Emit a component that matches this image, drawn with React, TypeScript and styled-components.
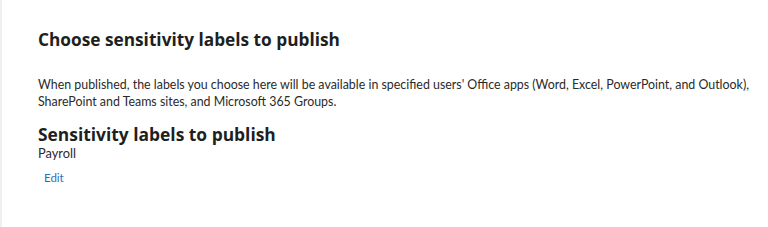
import React from 'react'
import styled, { createGlobalStyle } from 'styled-components'

const Global = createGlobalStyle`
  html, body {
    margin: 0;
    padding: 0;
    background: #ffffff;
  }
  body {
    font-family: Lato, "Open Sans", sans-serif;
    color: #323130;
  }
`

const Page = styled.div`
  box-sizing: border-box;
  width: 768px;
  height: 227px;
  border-left: 2px solid #efefef;
  padding: 28px 12px 0 36px;
`

const Title = styled.h2`
  margin: 0;
  font-family: "Open Sans", sans-serif;
  font-size: 17.25px;
  font-weight: 700;
  line-height: 24px;
  color: #201f1e;
`

const Description = styled.p`
  margin: 24px 0 0;
  font-size: 12.4px;
  line-height: 17px;
  color: #2b2a29;
`

const SectionTitle = styled.h3`
  margin: 13px 0 0;
  font-family: "Open Sans", sans-serif;
  font-size: 17.4px;
  font-weight: 700;
  line-height: 22px;
  color: #201f1e;
`

const Value = styled.div`
  font-size: 12.8px;
  line-height: 17px;
  color: #2b2a29;
`

const EditLink = styled.button`
  display: block;
  margin: 8px 0 0 6px;
  padding: 0;
  border: none;
  background: none;
  font-family: Lato, sans-serif;
  font-size: 11.5px;
  line-height: 16px;
  color: #2a6fbd;
  cursor: pointer;
`

export default function App() {
  return (
    <>
      <Global />
      <Page>
        <Title>Choose sensitivity labels to publish</Title>
        <Description>
          When published, the labels you choose here will be available in specified users' Office apps (Word, Excel,
          PowerPoint, and Outlook), SharePoint and Teams sites, and Microsoft 365 Groups.
        </Description>
        <SectionTitle>Sensitivity labels to publish</SectionTitle>
        <Value>Payroll</Value>
        <EditLink>Edit</EditLink>
      </Page>
    </>
  )
}
